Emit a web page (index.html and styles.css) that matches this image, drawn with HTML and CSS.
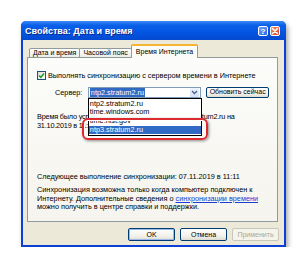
FILE: index.html
```html
<!DOCTYPE html>
<html lang="ru">
<head>
  <meta charset="UTF-8" />
  <title>Свойства: Дата и время</title>
  <link rel="stylesheet" href="styles.css">
</head>
<body>
  <div class="window">
    <div class="titlebar">
      <span class="title">Свойства: Дата и время</span>
      <div class="title-buttons">
        <span class="tb-btn help">?</span>
        <span class="tb-btn close">
          <svg width="8" height="8" viewBox="0 0 8 8"><path d="M1.5 1.5 L6.5 6.5 M6.5 1.5 L1.5 6.5" stroke="#fff" stroke-width="1.6" stroke-linecap="round"/></svg>
        </span>
      </div>
    </div>

    <div class="client">
      <div class="tabs">
        <div class="tab">Дата и время</div>
        <div class="tab">Часовой пояс</div>
        <div class="tab active">Время Интернета</div>
      </div>

      <div class="page">
        <div class="check-row">
          <span class="checkbox">
            <svg width="7" height="7" viewBox="0 0 7 7"><path d="M1 3.5 L2.8 5.3 L6 1.5" fill="none" stroke="#21a121" stroke-width="1.5"/></svg>
          </span>
          <span>Выполнять синхронизацию с сервером времени в Интернете</span>
        </div>

        <div class="server-row">
          <span class="server-label">Сервер:</span>
          <div class="combo">
            <span class="combo-value"><span class="sel">ntp2.stratum2.ru</span></span>
            <span class="combo-arrow">
              <svg width="7" height="5" viewBox="0 0 7 5"><path d="M1 1 L3.5 3.5 L6 1" fill="none" stroke="#4d6185" stroke-width="1.3"/></svg>
            </span>
            <ul class="combo-list">
              <li>ntp2.stratum2.ru</li>
              <li>time.windows.com</li>
              <li>time.nist.gov</li>
              <li class="hover">ntp3.stratum2.ru</li>
            </ul>
          </div>
          <button class="btn">Обновить сейчас</button>
        </div>

        <p class="status">Время было успешно синхронизировано с ntp2.stratum2.ru на 31.10.2019 в 11:11.</p>
        <p class="next">Следующее выполнение синхронизации: 07.11.2019 в 11:11</p>
        <p class="note">Синхронизация возможна только когда компьютер подключен к Интернету. Дополнительные сведения о <a href="#">синхронизации времени</a> можно получить в центре справки и поддержки.</p>
      </div>

      <div class="actions">
        <button class="btn default">OK</button>
        <button class="btn">Отмена</button>
        <button class="btn" disabled>Применить</button>
      </div>
    </div>

    <div class="highlight"></div>
  </div>
</body>
</html>
```

FILE: styles.css
```css
body {
  margin: 0;
  background-color: #fff;
  font-family: "Liberation Sans", Arial, sans-serif;
  font-size: 7.3px;
  color: #000;
}
.window {
  position: relative;
  margin: 21px 0 0 21px;
  width: 265px;
  height: 226px;
  box-sizing: border-box;
  background-color: #0b3fd6;
  border-radius: 5px 5px 0 0;
  box-shadow: 2px 3px 5px rgba(0, 0, 0, 0.35);
  display: flex;
  flex-direction: column;
}
.titlebar {
  height: 19px;
  flex: none;
  display: flex;
  align-items: center;
  justify-content: space-between;
  padding: 1px 6px 0 4px;
  box-sizing: border-box;
  border-radius: 5px 5px 0 0;
  background: linear-gradient(#3d8bf6, #0a60e8 22%, #0355e2 60%, #0449d0);
}
.title {
  color: #fff;
  font-weight: bold;
  font-size: 9px;
  text-shadow: 1px 1px 0 #0a2a8a;
}
.title-buttons {
  display: flex;
  gap: 2px;
}
.tb-btn {
  width: 10px;
  height: 10px;
  box-sizing: border-box;
  border: 1px solid #fff;
  border-radius: 2px;
  display: flex;
  align-items: center;
  justify-content: center;
  color: #fff;
  font-weight: bold;
  font-size: 8px;
}
.help {
  background: linear-gradient(135deg, #6ea4fb, #2c68e8);
}
.close {
  background: linear-gradient(135deg, #f08a66, #d8431d);
}
.client {
  flex: 1;
  margin: 0 2px 2px 2px;
  padding: 4px 6px 0 4px;
  background-color: #ece9d8;
  display: flex;
  flex-direction: column;
}
.tabs {
  display: flex;
  align-items: flex-end;
  height: 13px;
  padding-left: 2px;
  position: relative;
  z-index: 1;
}
.tab {
  height: 9px;
  box-sizing: border-box;
  line-height: 8px;
  padding: 0 3px;
  border: 1px solid #919b9c;
  border-bottom: none;
  border-radius: 2px 2px 0 0;
  background: linear-gradient(#fff, #ecebe6);
  margin-right: -1px;
  font-size: 7px;
}
.tab.active {
  height: 14px;
  margin-bottom: -1px;
  line-height: 11px;
  padding: 0 4px;
  border-top: 2px solid #f7b332;
  background: #fbfbf8;
}
.page {
  height: 165px;
  box-sizing: border-box;
  border: 1px solid #919b9c;
  background: linear-gradient(#fcfcfa, #f5f4ee);
  padding: 13px 8px 0 9px;
}
.check-row {
  display: flex;
  align-items: center;
  gap: 2px;
  height: 9px;
}
.checkbox {
  width: 9px;
  height: 9px;
  box-sizing: border-box;
  border: 1px solid #1c5180;
  background: linear-gradient(135deg, #dcdcd6, #fff);
  display: flex;
  align-items: center;
  justify-content: center;
}
.server-row {
  display: flex;
  align-items: center;
  margin-top: 6px;
  padding-left: 18px;
  height: 12px;
}
.server-label {
  width: 33px;
}
.combo {
  position: relative;
  width: 114px;
  height: 11px;
  box-sizing: border-box;
  border: 1px solid #7f9db9;
  background: #fff;
  display: flex;
  align-items: center;
  padding: 0 1px;
}
.combo-value {
  flex: 1;
}
.sel {
  background: #316ac5;
  color: #fff;
  padding: 0 1px;
}
.combo-arrow {
  width: 9px;
  height: 9px;
  display: flex;
  align-items: center;
  justify-content: center;
  background: linear-gradient(#eef3fd, #d3dff8);
  border-radius: 1px;
}
.combo-list {
  position: absolute;
  left: -1px;
  top: 10px;
  width: 114px;
  margin: 0;
  padding: 1px 0;
  list-style: none;
  box-sizing: border-box;
  border: 1px solid #000;
  background: #fff;
  z-index: 2;
}
.combo-list li {
  height: 8.7px;
  line-height: 8.7px;
  padding: 0 1px;
  white-space: nowrap;
}
.combo-list li.hover {
  background: #316ac5;
  color: #fff;
}
.btn {
  font-family: "Liberation Sans", Arial, sans-serif;
  font-size: 7px;
  color: #000;
  height: 11px;
  padding: 0;
  border: 1px solid #003c74;
  border-radius: 2px;
  background: linear-gradient(#fff, #f0efe8 70%, #dcdad0);
  line-height: 8px;
  white-space: nowrap;
}
.server-row .btn {
  margin-left: 5px;
  width: 63px;
}
p {
  margin: 0;
  line-height: 9px;
}
.status {
  margin-top: 14px;
  width: 204px;
  letter-spacing: -0.2px;
}
.next {
  margin-top: 42px;
}
.note {
  margin-top: 5px;
  line-height: 8.7px;
}
.note a {
  color: #1c3ed2;
}
.actions {
  display: flex;
  justify-content: flex-end;
  gap: 5px;
  margin-top: 6px;
  margin-right: -1px;
}
.actions .btn {
  width: 47px;
  height: 13px;
}
.actions .btn.default {
  box-shadow: inset 0 0 0 1px #9db9eb;
}
.actions .btn:disabled {
  color: #aca899;
  border-color: #c9c7ba;
  background: #f5f4ea;
}
.highlight {
  position: absolute;
  left: 61px;
  top: 97px;
  width: 126px;
  height: 22px;
  box-sizing: border-box;
  border: 2px solid #dc2a2f;
  border-radius: 6px;
  box-shadow: inset 0 0 0 1px #fff, 1px 1px 3px rgba(0, 0, 0, 0.45);
  z-index: 3;
}
```
